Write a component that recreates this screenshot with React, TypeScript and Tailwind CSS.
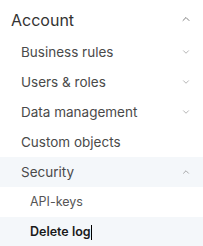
import { ChevronDown, ChevronUp } from "lucide-react";

type Item = { label: string; chevron?: "down" | "up"; active?: boolean };

const sections: Item[] = [
  { label: "Business rules", chevron: "down" },
  { label: "Users & roles", chevron: "down" },
  { label: "Data management", chevron: "down" },
  { label: "Custom objects" },
  { label: "Security", chevron: "up", active: true },
];

function App(): JSX.Element {
  return (
    <div className="w-[203px] h-[246px] bg-white overflow-hidden font-['Inter',sans-serif]">
      <div className="h-[37px] flex items-center justify-between pt-[3px] pl-[11px] pr-[11px]">
        <span className="text-[16px] text-[#333]">Account</span>
        <ChevronUp size={12} strokeWidth={1.5} className="text-[#555] -mt-[3px]" />
      </div>
      {sections.map((item) => {
        return (
          <div
            key={item.label}
            className={
              "h-[30px] flex items-center justify-between pl-[21px] pr-[12px] " +
              (item.active ? "bg-[#f4f7fa]" : "")
            }
          >
            <span className="text-[13.5px] text-[#4a4a4a]">{item.label}</span>
            {item.chevron === "down" && (
              <ChevronDown size={10} strokeWidth={1.5} className="text-[#888]" />
            )}
            {item.chevron === "up" && (
              <ChevronUp size={10} strokeWidth={1.5} className="text-[#777]" />
            )}
          </div>
        );
      })}
      <div className="h-[30px] flex items-center pl-[30px]">
        <span className="text-[12.5px] text-[#555]">API-keys</span>
      </div>
      <div className="h-[30px] flex items-center pl-[30px] bg-[#f4f7fa]">
        <span className="text-[12.5px] font-semibold text-[#1a1a1a]">Delete log</span>
        <span className="w-px h-[15px] bg-black" />
      </div>
    </div>
  );
}

export default App;
